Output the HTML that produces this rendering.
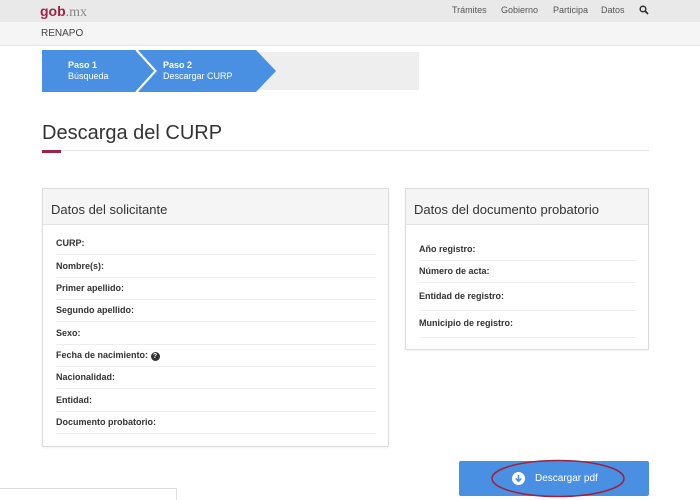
<!DOCTYPE html>
<html><head><meta charset="utf-8"><style>
*{margin:0;padding:0;box-sizing:border-box}
body{width:700px;height:500px;overflow:hidden;background:#fff;font-family:"Liberation Sans",sans-serif;color:#333;position:relative}
.top{position:absolute;left:0;top:0;width:700px;height:22px;background:#e9e9e9}
.logo{position:absolute;left:40px;top:3px;font-size:14px;color:#9d2449;font-weight:bold}
.logo span{font-weight:normal;color:#888;font-family:"Liberation Serif",serif}
.nav{position:absolute;top:5px;font-size:9px;color:#555}
.sub{position:absolute;left:0;top:22px;width:700px;height:24px;background:#f5f5f5;border-bottom:1px solid #e6e6e6}
.sub div{position:absolute;left:41px;top:6px;font-size:10px;color:#444}
.steps{position:absolute;left:42px;top:52px;width:377px;height:38px;background:#eee}
.a{position:absolute;color:#fff;font-size:9px;line-height:11px}
h1{position:absolute;left:42px;top:122px;font-size:20px;font-weight:normal;color:#333}
.hr{position:absolute;left:42px;top:150px;width:607px;height:1px;background:#e3e3e3}
.red{position:absolute;left:42px;top:150px;width:19px;height:3px;background:#9d2449}
.panel{position:absolute;border:1px solid #ddd;background:#fff;box-shadow:0 1px 2px rgba(0,0,0,.06)}
.ph{height:36px;background:#f5f5f5;border-bottom:1px solid #e3e3e3;font-size:13px;padding:13px 0 0 8px;color:#333}
.row{position:absolute;left:13px;font-size:9px;font-weight:bold;color:#333;height:22px;border-bottom:1px solid #eee;padding-top:5px}
.btn{position:absolute;left:459px;top:461px;width:190px;height:35px;background:#4a90e2;border-radius:2px;color:#fff;font-size:10px}
</style></head><body>
<div class="top"><div class="logo">gob<span>.mx</span></div>
<div class="nav" style="left:452px">Trámites</div><div class="nav" style="left:501px">Gobierno</div><div class="nav" style="left:553px">Participa</div><div class="nav" style="left:601px">Datos</div>
<svg style="position:absolute;left:639px;top:5px" width="10" height="10" viewBox="0 0 10 10"><circle cx="4" cy="4" r="2.8" fill="none" stroke="#333" stroke-width="1.5"/><path d="M6 6L9 9" stroke="#333" stroke-width="1.8"/></svg></div>
<div class="sub"><div>RENAPO</div></div>
<div class="steps"></div>
<svg style="position:absolute;left:42px;top:50px" width="236" height="42" viewBox="0 0 236 42"><polygon points="0,0 94,0 113,21 94,42 0,42" fill="#4a90e2"/><polygon points="96,0 214,0 234,21 214,42 96,42 115,21" fill="#4a90e2"/><polyline points="94,0 113,21 94,42" fill="none" stroke="#fff" stroke-width="1.5"/></svg>
<div class="a" style="left:68px;top:60px"><b>Paso 1</b><br>Búsqueda</div>
<div class="a" style="left:163px;top:60px"><b>Paso 2</b><br>Descargar CURP</div>
<h1>Descarga del CURP</h1><div class="hr"></div><div class="red"></div>
<div class="panel" style="left:42px;top:188px;width:347px;height:259px"><div class="ph">Datos del solicitante</div>
<div class="row" style="top:44px;width:320px">CURP:</div>
<div class="row" style="top:67px;width:320px">Nombre(s):</div>
<div class="row" style="top:89px;width:320px">Primer apellido:</div>
<div class="row" style="top:111px;width:320px">Segundo apellido:</div>
<div class="row" style="top:134px;width:320px">Sexo:</div>
<div class="row" style="top:156px;width:320px">Fecha de nacimiento: <span style="display:inline-block;width:9px;height:9px;border-radius:50%;background:#333;color:#fff;font-size:7px;text-align:center;line-height:9px">?</span></div>
<div class="row" style="top:178px;width:320px">Nacionalidad:</div>
<div class="row" style="top:201px;width:320px">Entidad:</div>
<div class="row" style="top:223px;width:320px">Documento probatorio:</div>
</div>
<div class="panel" style="left:405px;top:188px;width:244px;height:162px"><div class="ph">Datos del documento probatorio</div>
<div class="row" style="top:50px;width:217px">Año registro:</div>
<div class="row" style="top:72px;width:217px">Número de acta:</div>
<div class="row" style="top:97px;width:217px;height:25px">Entidad de registro:</div>
<div class="row" style="top:124px;width:217px;height:25px">Municipio de registro:</div>
</div>
<div class="btn"><svg style="position:absolute;left:53px;top:11px" width="13" height="13" viewBox="0 0 13 13"><circle cx="6.5" cy="6.5" r="6.5" fill="#fff"/><path d="M6.5 3V9M3.8 6.5L6.5 9.3L9.2 6.5" stroke="#4a90e2" stroke-width="1.6" fill="none"/></svg><span style="position:absolute;left:76px;top:12px">Descargar pdf</span>
<svg style="position:absolute;left:31px;top:-3px" width="136" height="41"><ellipse cx="68" cy="20.5" rx="66" ry="18" fill="none" stroke="#a02040" stroke-width="1.5"/></svg></div>
<div style="position:absolute;left:0;top:488px;width:177px;height:12px;border-top:1px solid #ddd;border-right:1px solid #ddd;background:#fff"></div>
</body></html>
